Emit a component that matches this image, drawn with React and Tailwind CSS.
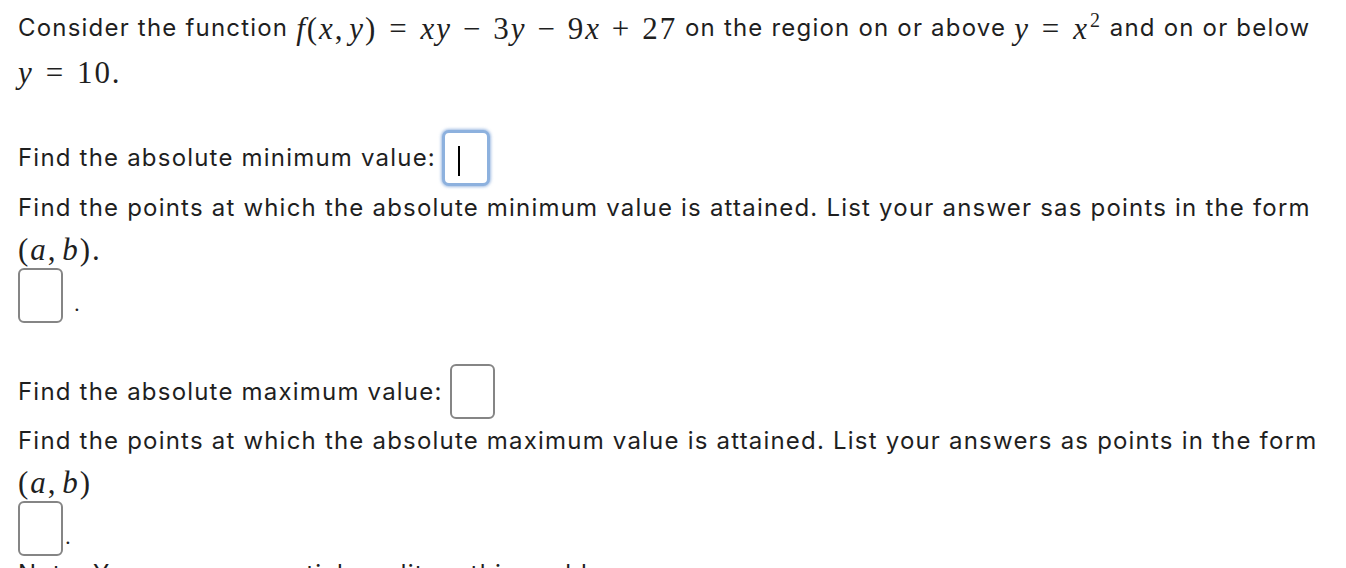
import React from "react";

const V = ({ children }) => <i className="italic">{children}</i>;

function Math({ children }) {
  return (
    <span className="font-['Liberation_Serif',serif] text-[31px] tracking-[1.9px] leading-none">
      {children}
    </span>
  );
}

const Rel = ({ children }) => <span className="mx-[12px]">{children}</span>;
const Bin = ({ children }) => <span className="mx-[11px]">{children}</span>;

function Box({ dot, dotGap }) {
  return (
    <div className="flex items-end">
      <div className="w-[45px] h-[55px] border-2 border-[#858585] rounded-[6px] bg-white" />
      {dot && (
        <span className={`${dotGap ? "ml-[11px]" : "ml-[2px]"} mb-[9px] text-[20px] leading-none`}>.</span>
      )}
    </div>
  );
}

export default function App() {
  return (
    <div className="w-[1346px] h-[568px] overflow-hidden bg-white text-[#1f1f1f] font-['Inter','Liberation_Sans',sans-serif] text-[24px] tracking-[1.2px] pl-[18px] pt-[6px]">
      <div className="h-[44px] flex items-center whitespace-nowrap">
        <span>Consider the function&nbsp;</span>
        <Math>
          <V>f</V>(<V>x</V>,<span className="ml-[5px]" /><V>y</V>)<Rel>=</Rel><V>xy</V>
          <Bin>−</Bin>3<V>y</V>
          <Bin>−</Bin>9<V>x</V>
          <Bin>+</Bin>27
        </Math>
        <span>&nbsp;on the region on or above&nbsp;</span>
        <Math>
          <V>y</V>
          <Rel>=</Rel>
          <V>x</V>
          <span className="text-[20px] relative -top-[12px] ml-[1px]">2</span>
        </Math>
        <span>&nbsp;and on or below</span>
      </div>
      <div className="h-[44px] flex items-center whitespace-nowrap">
        <Math>
          <V>y</V>
          <Rel>=</Rel>10.
        </Math>
      </div>

      <div className="mt-[36px] h-[56px] flex items-center whitespace-nowrap">
        <span>Find the absolute minimum value:</span>
        <div className="ml-[6px] relative w-[48px] h-[56px] rounded-[7px] border-[3px] border-[#8db1de] shadow-[0_0_3px_1px_rgba(120,160,215,0.7)] bg-white">
          <div className="absolute left-[13px] top-[13px] w-[2px] h-[30px] bg-black" />
        </div>
      </div>
      <div className="h-[44px] flex items-center whitespace-nowrap">
        <span>
          Find the points at which the absolute minimum value is attained. List your answer sas points in the form
        </span>
      </div>
      <div className="h-[38px] flex items-center whitespace-nowrap">
        <Math>
          (<V>a</V>,<span className="ml-[5px]" /><V>b</V>).
        </Math>
      </div>
      <Box dot dotGap />

      <div className="mt-[41px] h-[55px] flex items-center whitespace-nowrap">
        <span>Find the absolute maximum value:</span>
        <div className="ml-[7px] w-[45px] h-[55px] border-2 border-[#858585] rounded-[6px] bg-white" />
      </div>
      <div className="h-[44px] flex items-center whitespace-nowrap">
        <span>
          Find the points at which the absolute maximum value is attained. List your answers as points in the form
        </span>
      </div>
      <div className="h-[38px] flex items-center whitespace-nowrap">
        <Math>
          (<V>a</V>,<span className="ml-[5px]" /><V>b</V>)
        </Math>
      </div>
      <Box dot />
      <div className="h-[36px] flex items-center whitespace-nowrap">
        <span>Note: You can earn partial credit on this problem.</span>
      </div>
    </div>
  );
}
